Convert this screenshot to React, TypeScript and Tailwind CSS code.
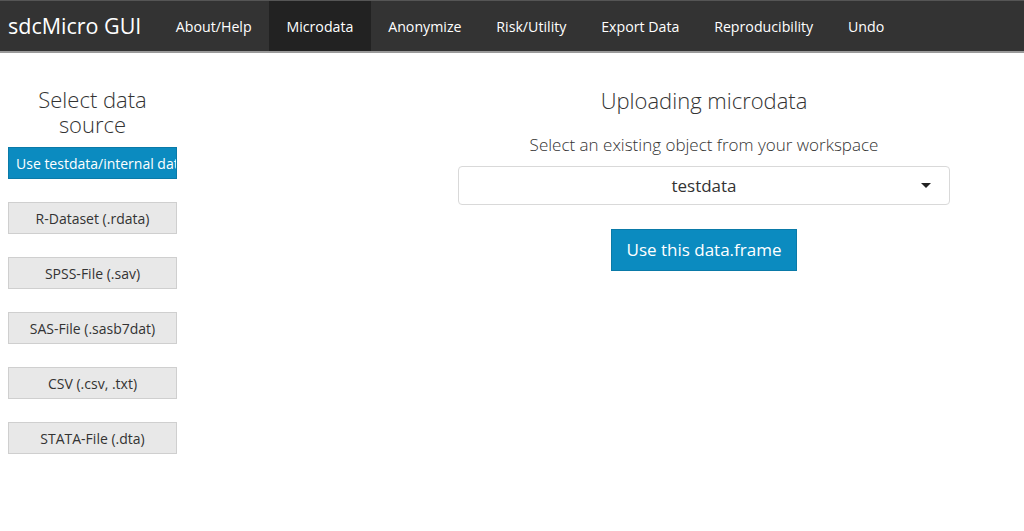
import React from "react";

const navItems = ["About/Help", "Microdata", "Anonymize", "Risk/Utility", "Export Data", "Reproducibility", "Undo"];

const sources = ["R-Dataset (.rdata)", "SPSS-File (.sav)", "SAS-File (.sasb7dat)", "CSV (.csv, .txt)", "STATA-File (.dta)"];

const font = { fontFamily: '"Open Sans", "Noto Sans", sans-serif' };

const App = () => {
  return (
    <div className="min-h-[531px] bg-white text-[#333]" style={font}>
      {/* top navbar */}
      <nav className="flex h-[53px] items-stretch border-t border-b-2 border-t-[#555] border-b-[#9a9a9a] bg-[#333]">
        <span className="flex items-center pl-[8px] pr-[17px] pt-[1px] text-[21.5px] text-white">sdcMicro GUI</span>
        {navItems.map((item) => (
          <span
            key={item}
            className={`flex items-center px-[17.4px] pt-[1px] text-[14.2px] text-white ${item === "Microdata" ? "bg-[#222]" : ""}`}>
            {item}
          </span>
        ))}
      </nav>

      <div className="flex">
        {/* data source sidebar */}
        <div className="flex w-[185px] flex-col pl-[8px] pr-[8px]">
          <h3 className="mt-[34px] text-center text-[22px] font-light leading-[25px]">
            Select data
            <br />
            source
          </h3>
          <button className="mt-[10px] h-[32px] w-[169px] overflow-hidden whitespace-nowrap border border-[#0a7aa8] bg-[#0b8bc0] px-[7px] text-left text-[14px] text-white">
            Use testdata/internal data
          </button>
          {sources.map((s) => (
            <button
              key={s}
              className="mt-[23px] h-[32px] w-[169px] border border-[#cfcfcf] bg-[#e8e8e8] text-center text-[14px] text-[#333]">
              {s}
            </button>
          ))}
        </div>

        {/* upload panel */}
        <div className="ml-[199px] flex flex-1 justify-center">
          <div className="flex w-[492px] flex-col items-center">
            <h3 className="mt-[33px] text-[22px] font-light leading-[28px]">Uploading microdata</h3>
            <p className="mt-[20px] text-[17px] font-light leading-[22px]">Select an existing object from your workspace</p>
            <div className="relative mt-[10px] flex h-[39px] w-full items-center justify-center rounded-[4px] border border-[#d9d9d9] text-[17px]">
              testdata
              <span className="absolute right-[18px] top-[16px] h-0 w-0 border-x-[5px] border-t-[5px] border-x-transparent border-t-[#222]" />
            </div>
            <button className="mt-[24px] h-[42px] border border-[#0a7aa8] bg-[#0b8bc0] px-[15px] text-[17px] text-white">
              Use this data.frame
            </button>
          </div>
        </div>
      </div>
    </div>
  );
};

export default App;
